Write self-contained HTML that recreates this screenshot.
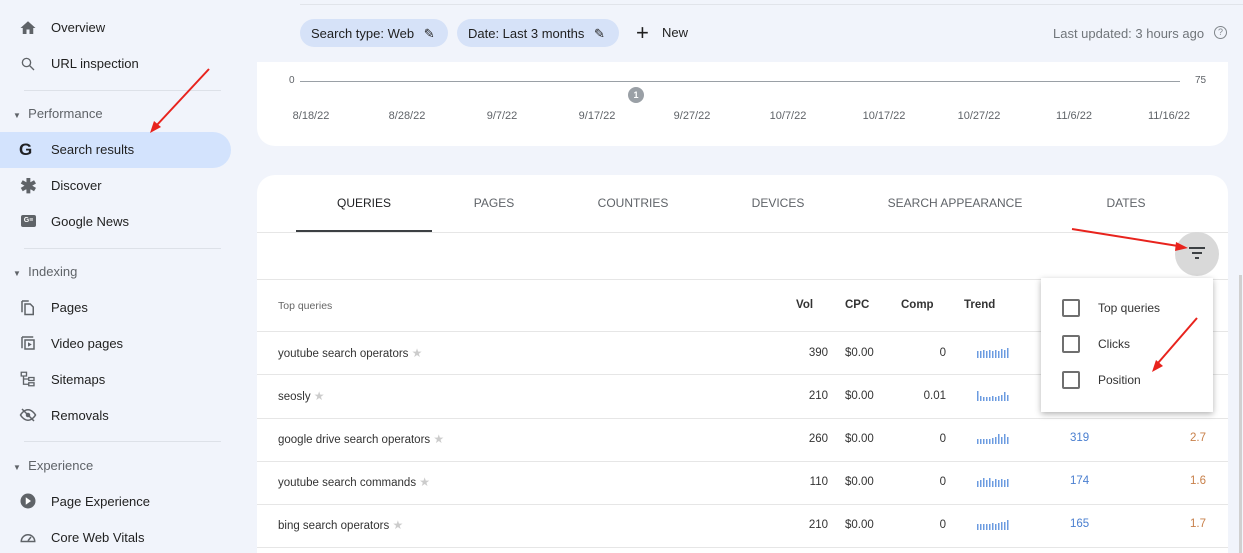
<!DOCTYPE html>
<html><head><meta charset="utf-8"><style>
*{box-sizing:border-box;margin:0;padding:0}
body{width:1243px;height:553px;overflow:hidden;background:#f1f4fb;font-family:"Liberation Sans",sans-serif;color:#1f1f1f;position:relative}
.a{position:absolute;white-space:nowrap}
.nav{font-size:13px;color:#1f1f1f}
.sec{font-size:13px;color:#5f6368}
.div{position:absolute;left:24px;width:197px;height:1px;background:#dde1e8}
.ico{position:absolute;left:19px;width:18px;height:18px}
.chip{position:absolute;top:19px;height:28px;border-radius:14px;background:#d6e2f8;font-size:13px;padding:7px 0 0 11px;color:#1f1f1f}
.card{position:absolute;left:257px;width:971px;background:#fff}
.date{position:absolute;top:110px;font-size:11px;color:#5f6368;transform:translateX(-50%)}
.tab{position:absolute;top:196px;font-size:12px;color:#5f6368;transform:translateX(-50%)}
.hl{position:absolute;left:257px;width:971px;height:1px;background:#e6e6e6}
.c{position:absolute;font-size:11.5px;color:#333}
.r{text-align:right}
.star{color:#ccc;font-size:12px}
.cb{position:absolute;left:1062px;width:18px;height:18px;border:2px solid #6f6f6f;border-radius:2px}
.pl{position:absolute;left:1098px;font-size:12px;color:#333}
</style></head><body>

<!-- sidebar -->
<div class="a" style="left:0;top:132px;width:231px;height:36px;background:#d3e3fd;border-radius:0 18px 18px 0"></div>
<svg class="ico" style="top:19px" viewBox="0 0 24 24"><path d="M10 20v-6h4v6h5v-8h3L12 3 2 12h3v8z" fill="#5f6368"/></svg>
<div class="a nav" style="left:51px;top:20px">Overview</div>
<svg class="ico" style="top:55px" viewBox="0 0 24 24"><circle cx="10" cy="10" r="5.5" fill="none" stroke="#5f6368" stroke-width="1.8"/><path d="M14 14l6 6" stroke="#5f6368" stroke-width="1.8"/></svg>
<div class="a nav" style="left:51px;top:56px">URL inspection</div>
<div class="div" style="top:90px"></div>
<div class="a sec" style="left:13px;top:106px"><span style="font-size:8px">▼</span>&nbsp; Performance</div>
<div class="a" style="left:19px;top:140px;font-size:17px;font-weight:bold;color:#202124">G</div>
<div class="a nav" style="left:51px;top:142px">Search results</div>
<div class="a" style="left:20px;top:174px;font-size:20px;color:#5f6368;font-weight:bold">✱</div>
<div class="a nav" style="left:51px;top:178px">Discover</div>
<div class="a" style="left:21px;top:215px;width:15px;height:12px;background:#5f6368;border-radius:2px;color:#fff;font-size:7px;line-height:12px;text-align:center;font-weight:bold">G≡</div>
<div class="a nav" style="left:51px;top:214px">Google News</div>
<div class="div" style="top:248px"></div>
<div class="a sec" style="left:13px;top:264px"><span style="font-size:8px">▼</span>&nbsp; Indexing</div>
<svg class="ico" style="top:298px" viewBox="0 0 24 24"><path d="M4 4v15M4 4h9M8 8h7l4 4v10H8z" fill="none" stroke="#5f6368" stroke-width="2"/></svg>
<div class="a nav" style="left:51px;top:300px">Pages</div>
<svg class="ico" style="top:334px" viewBox="0 0 24 24"><path d="M4 4v15M4 4h15M8 8h12v12H8z" fill="none" stroke="#5f6368" stroke-width="2"/><path d="M12 11l5 3-5 3z" fill="#5f6368"/></svg>
<div class="a nav" style="left:51px;top:336px">Video pages</div>
<svg class="ico" style="top:370px" viewBox="0 0 24 24"><path d="M3 3h7v5H3zM13 10h7v4h-7zM13 17h7v4h-7zM6 8v11h7M6 12h7" fill="none" stroke="#5f6368" stroke-width="1.8"/></svg>
<div class="a nav" style="left:51px;top:372px">Sitemaps</div>
<svg class="ico" style="top:406px" viewBox="0 0 24 24"><path d="M2 12s4-7 10-7 10 7 10 7-4 7-10 7S2 12 2 12z" fill="none" stroke="#5f6368" stroke-width="2"/><circle cx="12" cy="12" r="3" fill="#5f6368"/><path d="M4 4l16 16" stroke="#5f6368" stroke-width="2"/></svg>
<div class="a nav" style="left:51px;top:408px">Removals</div>
<div class="div" style="top:441px"></div>
<div class="a sec" style="left:13px;top:458px"><span style="font-size:8px">▼</span>&nbsp; Experience</div>
<svg class="ico" style="top:492px" viewBox="0 0 24 24"><circle cx="12" cy="12" r="10" fill="#5f6368"/><path d="M9 7l7 5-7 5z" fill="#fff"/></svg>
<div class="a nav" style="left:51px;top:494px">Page Experience</div>
<svg class="ico" style="top:528px" viewBox="0 0 24 24"><path d="M3 18a9 9 0 1 1 18 0z" fill="none" stroke="#5f6368" stroke-width="2"/><path d="M12 17l4-5" stroke="#5f6368" stroke-width="2"/></svg>
<div class="a nav" style="left:51px;top:530px">Core Web Vitals</div>

<!-- top -->
<div class="a" style="left:300px;top:4px;width:943px;height:1px;background:#e1e4ea"></div>
<div class="chip" style="left:300px;width:148px">Search type: Web <span style="margin-left:6px">✎</span></div>
<div class="chip" style="left:457px;width:162px">Date: Last 3 months <span style="margin-left:6px">✎</span></div>
<div class="a" style="left:636px;top:20px;font-size:22px;font-weight:300">+</div>
<div class="a" style="left:662px;top:25px;font-size:13px">New</div>
<div class="a" style="left:1053px;top:26px;font-size:13px;color:#70757a">Last updated: 3 hours ago</div>
<div class="a" style="left:1214px;top:26px;width:13px;height:13px;border:1px solid #80868b;border-radius:50%;font-size:9px;text-align:center;color:#80868b;line-height:11px">?</div>

<!-- chart card -->
<div class="card" style="top:62px;height:84px;border-radius:0 0 18px 18px"></div>
<div class="a" style="left:289px;top:75px;font-size:10px;color:#5f6368">0</div>
<div class="a" style="left:300px;top:81px;width:880px;height:1px;background:#9aa0a6"></div>
<div class="a" style="left:1195px;top:75px;font-size:10px;color:#5f6368">75</div>
<div class="a" style="left:628px;top:87px;width:16px;height:16px;border-radius:50%;background:#9aa0a6;color:#fff;font-size:9px;text-align:center;line-height:16px;font-weight:bold">1</div>
<div class="date" style="left:311px">8/18/22</div>
<div class="date" style="left:407px">8/28/22</div>
<div class="date" style="left:502px">9/7/22</div>
<div class="date" style="left:597px">9/17/22</div>
<div class="date" style="left:692px">9/27/22</div>
<div class="date" style="left:788px">10/7/22</div>
<div class="date" style="left:884px">10/17/22</div>
<div class="date" style="left:979px">10/27/22</div>
<div class="date" style="left:1074px">11/6/22</div>
<div class="date" style="left:1169px">11/16/22</div>

<!-- scrollbar -->
<div class="a" style="left:1239px;top:275px;width:3px;height:278px;background:#d0d0d0"></div>

<!-- table card -->
<div class="card" style="top:175px;height:378px;border-radius:18px 18px 0 0"></div>
<div class="tab" style="left:364px;color:#202124">QUERIES</div>
<div class="tab" style="left:494px">PAGES</div>
<div class="tab" style="left:633px">COUNTRIES</div>
<div class="tab" style="left:778px">DEVICES</div>
<div class="tab" style="left:955px">SEARCH APPEARANCE</div>
<div class="tab" style="left:1126px">DATES</div>
<div class="a" style="left:296px;top:230px;width:136px;height:2px;background:#3c4043"></div>
<div class="hl" style="top:232px"></div>
<div class="a" style="left:1175px;top:232px;width:44px;height:44px;border-radius:50%;background:#d9d9d9"></div>
<svg class="a" style="left:1188px;top:246px" width="18" height="14" viewBox="0 0 18 14"><path d="M1 2h16M4 7h10M7 12h4" stroke="#3c4043" stroke-width="2"/></svg>
<div class="hl" style="top:279px"></div>

<div class="c" style="left:278px;top:300px;font-size:10.5px;color:#666">Top queries</div>
<div class="c" style="left:796px;top:299px;font-weight:bold">Vol</div>
<div class="c" style="left:845px;top:299px;font-weight:bold">CPC</div>
<div class="c" style="left:901px;top:299px;font-weight:bold">Comp</div>
<div class="c" style="left:964px;top:299px;font-weight:bold">Trend</div>
<div class="hl" style="top:331px"></div>

<!-- rows -->
<div class="c" style="left:278px;top:346px">youtube search operators <span class="star">★</span></div>
<div class="c r" style="left:780px;width:48px;top:347px">390</div><div class="c" style="left:845px;top:347px">$0.00</div><div class="c r" style="left:900px;width:46px;top:347px">0</div>
<div class="hl" style="top:374px"></div>
<div class="c" style="left:278px;top:389px">seosly <span class="star">★</span></div>
<div class="c r" style="left:780px;width:48px;top:390px">210</div><div class="c" style="left:845px;top:390px">$0.00</div><div class="c r" style="left:900px;width:46px;top:390px">0.01</div>
<div class="hl" style="top:418px"></div>
<div class="c" style="left:278px;top:432px">google drive search operators <span class="star">★</span></div>
<div class="c r" style="left:780px;width:48px;top:433px">260</div><div class="c" style="left:845px;top:433px">$0.00</div><div class="c r" style="left:900px;width:46px;top:433px">0</div>
<div class="c" style="left:1070px;top:432px;color:#4a7fd0">319</div><div class="c r" style="left:1170px;width:36px;top:432px;color:#c8804a">2.7</div>
<div class="hl" style="top:461px"></div>
<div class="c" style="left:278px;top:475px">youtube search commands <span class="star">★</span></div>
<div class="c r" style="left:780px;width:48px;top:476px">110</div><div class="c" style="left:845px;top:476px">$0.00</div><div class="c r" style="left:900px;width:46px;top:476px">0</div>
<div class="c" style="left:1070px;top:475px;color:#4a7fd0">174</div><div class="c r" style="left:1170px;width:36px;top:475px;color:#c8804a">1.6</div>
<div class="hl" style="top:504px"></div>
<div class="c" style="left:278px;top:518px">bing search operators <span class="star">★</span></div>
<div class="c r" style="left:780px;width:48px;top:519px">210</div><div class="c" style="left:845px;top:519px">$0.00</div><div class="c r" style="left:900px;width:46px;top:519px">0</div>
<div class="c" style="left:1070px;top:518px;color:#4a7fd0">165</div><div class="c r" style="left:1170px;width:36px;top:518px;color:#c8804a">1.7</div>
<div class="hl" style="top:547px"></div>

<!-- sparklines -->
<svg class="a" style="left:977px;top:346px" width="34" height="190" viewBox="0 0 34 190">
<g fill="#6b9be0">
<path d="M0 5h1.5v7H0zM3 5h1.5v7H3zM6 4h1.5v8H6zM9 5h1.5v7H9zM12 4h1.5v8H12zM15 5h1.5v7H15zM18 4h1.5v8H18zM21 5h1.5v7H21zM24 3h1.5v9H24zM27 4h1.5v8H27zM30 2h1.5v10H30z"/>
<path transform="translate(0,43)" d="M0 2h1.5v10H0zM3 7h1.5v5H3zM6 8h1.5v4H6zM9 8h1.5v4H9zM12 8h1.5v4H12zM15 7h1.5v5H15zM18 8h1.5v4H18zM21 7h1.5v5H21zM24 6h1.5v6H24zM27 3h1.5v9H27zM30 6h1.5v6H30z"/>
<path transform="translate(0,86)" d="M0 7h1.5v5H0zM3 7h1.5v5H3zM6 7h1.5v5H6zM9 7h1.5v5H9zM12 7h1.5v5H12zM15 6h1.5v6H15zM18 5h1.5v7H18zM21 2h1.5v10H21zM24 5h1.5v7H24zM27 2h1.5v10H27zM30 5h1.5v7H30z"/>
<path transform="translate(0,129)" d="M0 6h1.5v6H0zM3 5h1.5v7H3zM6 3h1.5v9H6zM9 5h1.5v7H9zM12 3h1.5v9H12zM15 6h1.5v6H15zM18 4h1.5v8H18zM21 5h1.5v7H21zM24 4h1.5v8H24zM27 5h1.5v7H27zM30 4h1.5v8H30z"/>
<path transform="translate(0,172)" d="M0 6h1.5v6H0zM3 6h1.5v6H3zM6 6h1.5v6H6zM9 6h1.5v6H9zM12 6h1.5v6H12zM15 5h1.5v7H15zM18 6h1.5v6H18zM21 5h1.5v7H21zM24 4h1.5v8H24zM27 4h1.5v8H27zM30 2h1.5v10H30z"/>
</g></svg>

<!-- popup -->
<div class="a" style="left:1041px;top:278px;width:172px;height:134px;background:#fff;box-shadow:0 2px 6px rgba(0,0,0,.3)"></div>
<div class="cb" style="top:299px"></div><div class="pl" style="top:301px">Top queries</div>
<div class="cb" style="top:335px"></div><div class="pl" style="top:337px">Clicks</div>
<div class="cb" style="top:371px"></div><div class="pl" style="top:373px">Position</div>

<!-- red arrows -->
<svg class="a" style="left:0;top:0" width="1243" height="553">
<g stroke="#e8231d" stroke-width="2" fill="#e8231d">
<line x1="209" y1="69" x2="156" y2="126"/>
<path d="M150 133l4-12 7 6z" stroke="none"/>
<line x1="1072" y1="229" x2="1178" y2="246"/>
<path d="M1188 248l-12-6-1 9z" stroke="none"/>
<line x1="1197" y1="318" x2="1158" y2="363"/>
<path d="M1152 372l4-12 7 6z" stroke="none"/>
</g></svg>
</body></html>
